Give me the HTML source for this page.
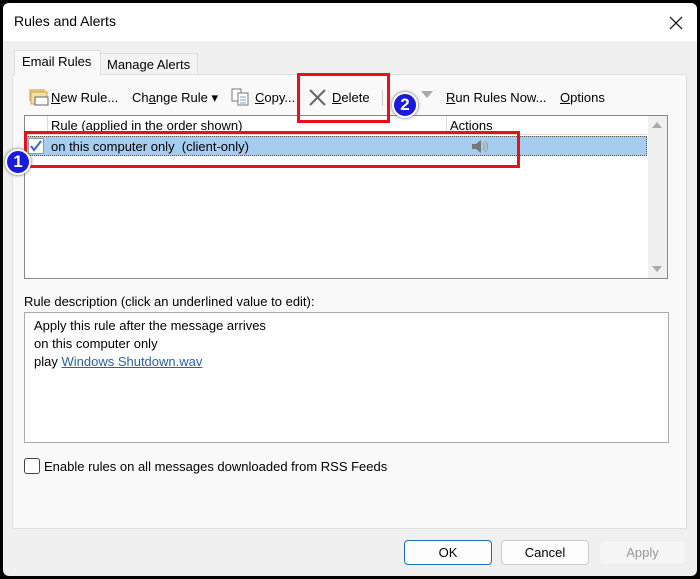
<!DOCTYPE html>
<html><head><style>
*{margin:0;padding:0;box-sizing:border-box}
body{width:700px;height:579px;background:#000;position:relative;overflow:hidden;font-family:"Liberation Sans",sans-serif;font-size:13px;color:#000}
.a{position:absolute}
u{text-decoration:underline}
.btn{position:absolute;top:540px;height:25px;border:1px solid #ccc;border-radius:4px;background:#fdfdfd;text-align:center;line-height:23px;font-size:13px}
.circ{position:absolute;width:26px;height:26px;border-radius:50%;background:#1a1adc;border:2px solid #fff;box-shadow:0 0 3px #555;color:#fff;font-weight:bold;font-size:17px;text-align:center;line-height:22px}
</style></head><body>
<div class="a" style="left:3px;top:3px;width:694px;height:573px;background:#f0f0f0;border-radius:6px"></div>
<div class="a" style="left:3px;top:3px;width:694px;height:38px;background:#fff;border-radius:6px 6px 0 0"></div>
<div class="a" style="left:14px;top:13px;font-size:14px">Rules and Alerts</div>
<svg class="a" style="left:669px;top:16px" width="14" height="14"><path d="M1 1L13 13M13 1L1 13" stroke="#222" stroke-width="1.3"/></svg>
<!-- tab panel -->
<div class="a" style="left:12px;top:74px;width:675px;height:455px;background:#f9f9f9;border:1px solid #e0e0e0"></div>
<div class="a" style="left:14px;top:50px;width:87px;height:25px;background:#f9f9f9;border:1px solid #ddd;border-bottom:none;padding:3px 0 0 7px;font-size:13px">Email Rules</div>
<div class="a" style="left:100px;top:53px;width:98px;height:21px;background:#f3f3f3;border:1px solid #ddd;border-bottom:none;padding:3px 0 0 6px;font-size:13px">Manage Alerts</div>
<!-- toolbar -->
<svg class="a" style="left:27px;top:87px" width="22" height="20"><rect x="2" y="2" width="16" height="12" fill="#e8c77a"/><rect x="4" y="5" width="16" height="12" fill="#f5dfa3" stroke="#c9a450"/><rect x="8" y="10" width="13" height="8" fill="#fff" stroke="#666"/></svg>
<div class="a" style="left:51px;top:90px"><u>N</u>ew Rule...</div>
<div class="a" style="left:132px;top:90px">Ch<u>a</u>nge Rule ▾</div>
<svg class="a" style="left:231px;top:88px" width="20" height="18"><rect x="1" y="1" width="9" height="12" fill="#fff" stroke="#777"/><rect x="7" y="5" width="10" height="12" fill="#fff" stroke="#777"/><path d="M9 9h6M9 12h6M9 15h6" stroke="#7aa0c8"/></svg>
<div class="a" style="left:255px;top:90px"><u>C</u>opy...</div>
<svg class="a" style="left:309px;top:89px" width="17" height="17"><path d="M1 1L16 16M16 1L1 16" stroke="#666" stroke-width="2"/></svg>
<div class="a" style="left:332px;top:90px"><u>D</u>elete</div>
<div class="a" style="left:382px;top:90px;width:1px;height:16px;background:#ccc"></div>
<div class="a" style="left:421px;top:91px;width:0;height:0;border-left:6px solid transparent;border-right:6px solid transparent;border-top:7px solid #aaa"></div>
<div class="a" style="left:446px;top:90px"><u>R</u>un Rules Now...</div>
<div class="a" style="left:560px;top:90px"><u>O</u>ptions</div>
<!-- list -->
<div class="a" style="left:24px;top:115px;width:644px;height:164px;background:#fff;border:1px solid #888"></div>
<div class="a" style="left:25px;top:116px;width:622px;height:19px;background:#fff;border-bottom:1px solid #ddd"></div>
<div class="a" style="left:47px;top:116px;width:1px;height:19px;background:#ddd"></div>
<div class="a" style="left:446px;top:116px;width:1px;height:19px;background:#ddd"></div>
<div class="a" style="left:51px;top:118px">Rule (applied in the order shown)</div>
<div class="a" style="left:450px;top:118px">Actions</div>
<div class="a" style="left:648px;top:116px;width:19px;height:162px;background:#f0f0f0"></div>
<div class="a" style="left:652px;top:122px;border-left:5px solid transparent;border-right:5px solid transparent;border-bottom:6px solid #aaa"></div>
<div class="a" style="left:652px;top:266px;border-left:5px solid transparent;border-right:5px solid transparent;border-top:6px solid #aaa"></div>
<div class="a" style="left:26px;top:136px;width:621px;height:20px;background:#a6cdf0;border:1px dotted #555"></div>
<svg class="a" style="left:28px;top:138px" width="17" height="16"><rect x="0.5" y="0.5" width="15" height="15" fill="#fff" stroke="#999"/><path d="M3 8l3 4 7-9" stroke="#3a72c4" stroke-width="2.2" fill="none"/></svg>
<div class="a" style="left:51px;top:139px">on this computer only&nbsp; (client-only)</div>
<svg class="a" style="left:471px;top:139px" width="18" height="15"><path d="M1 5h4l5-4v13l-5-4H1z" fill="#777"/><path d="M12 4q3 3.5 0 7M14 2q5 5.5 0 11" stroke="#999" fill="none"/></svg>
<div class="a" style="left:24px;top:131px;width:496px;height:37px;border:3px solid #e8101a"></div>
<div class="a" style="left:297px;top:73px;width:93px;height:50px;border:3px solid #e8101a"></div>
<div class="circ" style="left:5px;top:149px">1</div>
<div class="circ" style="left:392px;top:92px">2</div>
<!-- description -->
<div class="a" style="left:24px;top:294px">Rule description (click an underlined value to edit):</div>
<div class="a" style="left:24px;top:312px;width:645px;height:131px;background:#fff;border:1px solid #aaa"></div>
<div class="a" style="left:34px;top:317px;line-height:18px">Apply this rule after the message arrives<br>on this computer only<br>play <u style="color:#2e5fa8">Windows Shutdown.wav</u></div>
<div class="a" style="left:24px;top:458px;width:16px;height:16px;border:1px solid #444;border-radius:3px;background:#fff"></div>
<div class="a" style="left:44px;top:459px">Enable rules on all messages downloaded from RSS Feeds</div>
<!-- buttons -->
<div class="btn" style="left:404px;width:88px;border:1.5px solid #1a6fc0">OK</div>
<div class="btn" style="left:501px;width:88px">Cancel</div>
<div class="btn" style="left:599px;width:87px;color:#999;background:#f5f5f5;border-color:#eee">Apply</div>
</body></html>
